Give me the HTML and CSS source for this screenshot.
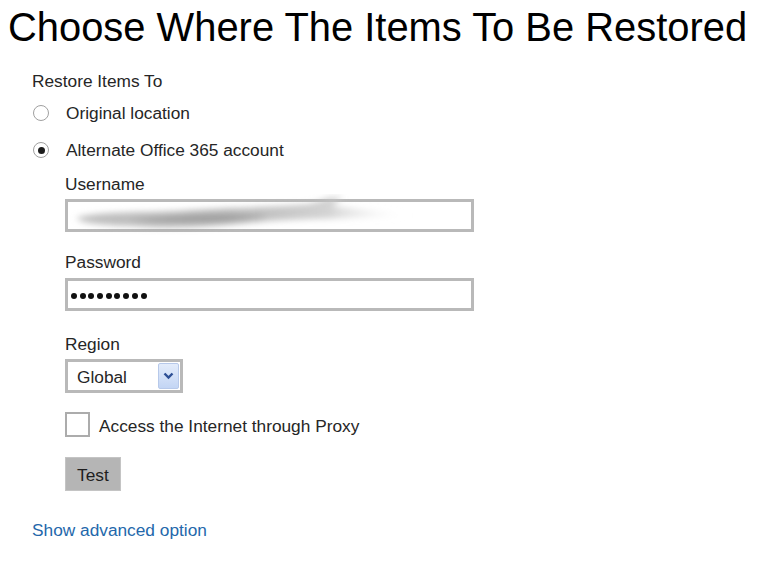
FILE: index.html
```html
<!DOCTYPE html>
<html>
<head>
<meta charset="utf-8">
<link rel="stylesheet" href="styles.css">
</head>
<body>
<div class="page">
  <h1 class="title">Choose Where The Items To Be Restored</h1>
  <div class="section">
    <div class="section-label">Restore Items To</div>
    <div class="radio-row first"><span class="radio"></span><span>Original location</span></div>
    <div class="radio-row second"><span class="radio checked"></span><span>Alternate Office 365 account</span></div>
    <div class="fields">
      <div class="field-label user-label">Username</div>
      <div class="textbox username">
        <svg class="smudge" width="360" height="44" viewBox="0 0 360 44">
          <defs>
            <filter id="blur" x="-20%" y="-50%" width="140%" height="200%"><feGaussianBlur stdDeviation="3"/></filter>
            <linearGradient id="fade" x1="0" x2="1" y1="0" y2="0">
              <stop offset="0" stop-color="#a5a5a5"/>
              <stop offset="0.45" stop-color="#999999"/>
              <stop offset="0.75" stop-color="#c0c0c0"/>
              <stop offset="1" stop-color="#ffffff" stop-opacity="0"/>
            </linearGradient>
          </defs>
          <g filter="url(#blur)">
            <path d="M8 24 C30 17 70 19 110 17 C150 14 200 14 240 10 C260 6 255 2 275 3 L265 12 C300 16 330 18 345 22 C300 24 250 24 200 27 C160 31 120 35 80 33 C50 31 18 32 8 24 Z" fill="url(#fade)" opacity="0.7"/>
            <path d="M60 26 C100 22 150 20 200 22 C180 27 120 30 60 26 Z" fill="#808080" opacity="0.5"/>
          </g>
        </svg>
      </div>
      <div class="field-label pass-label">Password</div>
      <div class="textbox password">
        <span class="dot"></span><span class="dot"></span><span class="dot"></span><span class="dot"></span><span class="dot"></span><span class="dot"></span><span class="dot"></span><span class="dot"></span><span class="dot"></span>
      </div>
      <div class="field-label region-label">Region</div>
      <div class="select">
        <span class="select-value">Global</span>
        <span class="select-btn">
          <svg width="11" height="8" viewBox="0 0 11 8"><path d="M1.5 1.5 L5.5 5.5 L9.5 1.5" fill="none" stroke="#2d4f95" stroke-width="2.4"/></svg>
        </span>
      </div>
      <div class="check-row">
        <span class="checkbox"></span>
        <span>Access the Internet through Proxy</span>
      </div>
      <div class="button">Test</div>
    </div>
    <a class="link" href="#">Show advanced option</a>
  </div>
</div>
</body>
</html>
```

FILE: styles.css
```css
html, body {
  margin: 0;
  padding: 0;
  background: #ffffff;
}
body {
  font-family: "Liberation Sans", Arial, sans-serif;
  font-size: 17.3px;
  line-height: 20px;
  color: #262626;
}
.page {
  padding: 4px 8px 0 8px;
}
.title {
  margin: 0;
  font-weight: normal;
  font-size: 39.9px;
  line-height: 46px;
  color: #000000;
  white-space: nowrap;
}
.section {
  padding-left: 24px;
  padding-top: 21px;
}
.section-label {
  height: 20px;
}
.radio-row {
  display: flex;
  align-items: center;
  height: 20px;
}
.radio-row.first { margin-top: 12px; }
.radio-row.second { margin-top: 17px; }
.radio {
  box-sizing: border-box;
  width: 16px;
  height: 16px;
  border-radius: 50%;
  border: 1.6px solid #a0a0a0;
  background: #ffffff;
  margin-left: 1px;
  margin-right: 17px;
  display: flex;
  align-items: center;
  justify-content: center;
}
.radio.checked::after {
  content: "";
  width: 7px;
  height: 7px;
  border-radius: 50%;
  background: #1c1c1c;
}
.fields {
  padding-left: 33px;
}
.field-label {
  height: 20px;
}
.user-label { margin-top: 14px; }
.pass-label { margin-top: 20px; }
.region-label { margin-top: 23px; }
.textbox {
  box-sizing: border-box;
  width: 409px;
  height: 33px;
  border: 3px solid #b9b9b9;
  background: #ffffff;
}
.username {
  margin-top: 5px;
  position: relative;
}
.smudge {
  position: absolute;
  left: 0;
  top: -8px;
}
.password {
  margin-top: 6px;
  display: flex;
  align-items: center;
  gap: 2.7px;
  padding: 2px 0 0 3px;
}
.dot {
  width: 6px;
  height: 6px;
  border-radius: 50%;
  background: #111111;
}
.select {
  box-sizing: border-box;
  margin-top: 5px;
  width: 118px;
  height: 34px;
  border: 3px solid #b9b9b9;
  display: flex;
  align-items: center;
  justify-content: space-between;
  padding: 1px 1px 1px 9px;
  background: #ffffff;
}
.select-value {
  padding-top: 1px;
}
.select-btn {
  box-sizing: border-box;
  width: 21px;
  height: 26px;
  border: 1px solid #b7c9ea;
  border-radius: 2px;
  background: linear-gradient(#e3ecfb, #c3d5f4);
  display: flex;
  align-items: center;
  justify-content: center;
}
.check-row {
  margin-top: 19px;
  display: flex;
  align-items: center;
  height: 25px;
}
.check-row span:last-child {
  padding-top: 3px;
}
.checkbox {
  box-sizing: border-box;
  width: 25px;
  height: 25px;
  border: 2px solid #acacac;
  background: #ffffff;
  margin-right: 9px;
}
.button {
  box-sizing: border-box;
  margin-top: 20px;
  width: 56px;
  height: 34px;
  background: #b5b5b5;
  border: 1px solid #c4c4c4;
  color: #1e1e1e;
  padding: 7px 0 0 11px;
}
.link {
  display: block;
  margin-top: 29px;
  color: #2468ab;
  text-decoration: none;
  width: max-content;
}
```
